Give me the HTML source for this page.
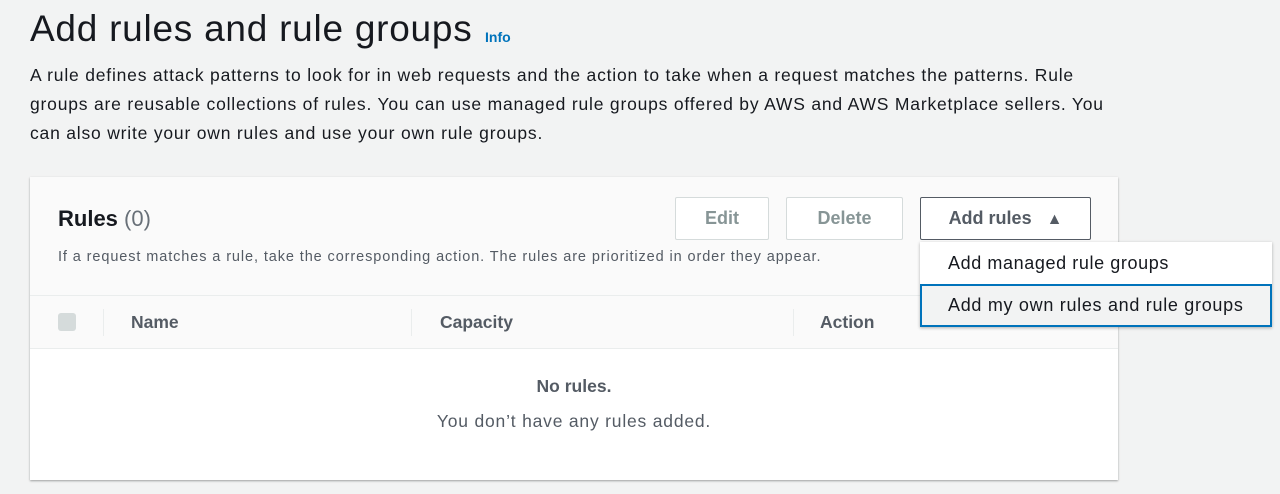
<!DOCTYPE html>
<html><head><style>
*{margin:0;padding:0;box-sizing:border-box}
body{width:1280px;height:494px;background:#f2f3f3;font-family:"Liberation Sans",sans-serif;color:#16191f;position:relative;overflow:hidden}
.a{position:absolute;white-space:nowrap}
h1{position:absolute;left:30px;top:8px;font-size:37px;font-weight:400;letter-spacing:0.75px;white-space:nowrap}
.info{font-size:14px;font-weight:700;color:#0073bb;position:absolute;left:485px;top:29px}
.desc{position:absolute;left:30px;top:61px;font-size:17.5px;line-height:29px;color:#16191f;white-space:nowrap;letter-spacing:0.8px}
.card{position:absolute;left:30px;top:177px;width:1088px;height:303px;background:#fff;box-shadow:0 1px 2px rgba(0,0,0,.35)}
.hd{position:absolute;left:0;top:0;width:100%;height:119px;background:#fafafa;border-bottom:1px solid #eaeded}
.th{position:absolute;left:0;top:119px;width:100%;height:53px;background:#fafafa;border-bottom:1px solid #eaeded}
.btn{position:absolute;top:20px;height:43px;border:1px solid #d5dbdb;background:#fff;border-radius:2px;font-weight:700;font-size:18px;color:#879596;text-align:center;line-height:41px}
.th span{position:absolute;top:16px;font-size:17.5px;font-weight:700;color:#545b64}
.dv{position:absolute;top:13px;width:1px;height:27px;background:#eaeded}
</style></head><body>
<h1>Add rules and rule groups</h1><span class="info a">Info</span>
<div class="desc">A rule defines attack patterns to look for in web requests and the action to take when a request matches the patterns. Rule<br>groups are reusable collections of rules. You can use managed rule groups offered by AWS and AWS Marketplace sellers. You<br>can also write your own rules and use your own rule groups.</div>
<div class="card">
 <div class="hd">
  <div class="a" style="left:28px;top:29px;font-size:22px;font-weight:700">Rules <span style="font-weight:400;color:#687078">(0)</span></div>
  <div class="a" style="left:28px;top:72px;font-size:14.5px;color:#545b64;letter-spacing:0.9px">If a request matches a rule, take the corresponding action. The rules are prioritized in order they appear.</div>
  <div class="btn" style="left:645px;width:94px">Edit</div>
  <div class="btn" style="left:756px;width:117px">Delete</div>
  <div class="btn" style="left:890px;width:171px;border-color:#545b64;color:#545b64">Add rules &nbsp;&nbsp;<span style="font-size:16px">▲</span></div>
 </div>
 <div class="th">
  <div class="a" style="left:28px;top:17px;width:18px;height:18px;background:#d5dbdb;border-radius:3px"></div>
  <div class="dv" style="left:73px"></div>
  <span style="left:101px">Name</span>
  <div class="dv" style="left:381px"></div>
  <span style="left:410px">Capacity</span>
  <div class="dv" style="left:763px"></div>
  <span style="left:790px">Action</span>
 </div>
 <div class="a" style="left:0;width:1088px;text-align:center;top:199px;font-size:17.5px;font-weight:700;color:#545b64">No rules.</div>
 <div class="a" style="left:0;width:1088px;text-align:center;top:234px;font-size:17.5px;color:#545b64;letter-spacing:0.8px">You don’t have any rules added.</div>
</div>
<div class="a" style="left:920px;top:242px;width:352px;height:85px;background:#fff;box-shadow:0 1px 3px rgba(0,0,0,.3)">
 <div class="a" style="left:28px;top:11px;font-size:18px;letter-spacing:0.6px">Add managed rule groups</div>
 <div class="a" style="left:0;top:42px;width:352px;height:43px;background:#f2f3f3;border:2px solid #0073bb"></div>
 <div class="a" style="left:28px;top:53px;font-size:18px;letter-spacing:0.7px">Add my own rules and rule groups</div>
</div>
</body></html>
